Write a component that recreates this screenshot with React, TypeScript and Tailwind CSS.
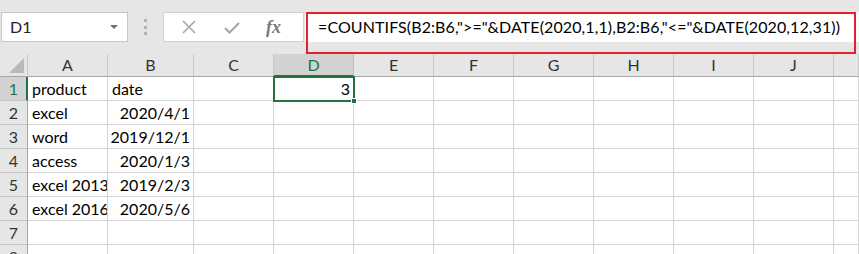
import type { ReactNode } from "react";

const COLS = ["A", "B", "C", "D", "E", "F", "G", "H", "I", "J", ""];
const WIDTHS = ["w-[80px]", "w-[86px]", "w-[80px]", "w-[80px]", "w-[80px]", "w-[80px]", "w-[80px]", "w-[80px]", "w-[80px]", "w-[80px]", "flex-1"];

type Cell = { text: string; right?: boolean };

const DATA: Record<number, Record<number, Cell>> = {
  1: { 0: { text: "product" }, 1: { text: "date" }, 3: { text: "3", right: true } },
  2: { 0: { text: "excel" }, 1: { text: "2020/4/1", right: true } },
  3: { 0: { text: "word" }, 1: { text: "2019/12/1", right: true } },
  4: { 0: { text: "access" }, 1: { text: "2020/1/3", right: true } },
  5: { 0: { text: "excel 2013" }, 1: { text: "2019/2/3", right: true } },
  6: { 0: { text: "excel 2016" }, 1: { text: "2020/5/6", right: true } },
};

const FORMULA = '=COUNTIFS(B2:B6,">="&DATE(2020,1,1),B2:B6,"<="&DATE(2020,12,31))';

function FormulaBar() {
  return (
    <div className="relative flex h-[54px] items-start bg-[#e6e6e6] pt-[12px]">
      <div className="ml-[1px] flex h-[30px] w-[127px] items-center justify-between border border-[#c6c6c6] bg-white pl-[8px] pr-[9px] text-[16px] text-[#222]">
        <span>D1</span>
        <svg width="8" height="4" viewBox="0 0 8 4">
          <path d="M0 0h8L4 4z" fill="#707070" />
        </svg>
      </div>
      <div className="ml-[16px] mt-[7px] flex h-[16px] flex-col justify-between">
        <span className="h-[3px] w-[3px] bg-[#b4b4b4]" />
        <span className="h-[3px] w-[3px] bg-[#b4b4b4]" />
        <span className="h-[3px] w-[3px] bg-[#b4b4b4]" />
      </div>
      <div className="ml-[16px] flex h-[30px] w-[141px] items-center border border-[#d0d0d0] bg-white">
        <svg className="ml-[18px]" width="14" height="14" viewBox="0 0 14 14">
          <path d="M1 1l12 12M13 1L1 13" stroke="#a6a6a6" strokeWidth="1.6" />
        </svg>
        <svg className="ml-[28px] mt-[2px]" width="16" height="12" viewBox="0 0 16 12">
          <path d="M1 6l4.5 4.5L15 1" stroke="#a6a6a6" strokeWidth="2" fill="none" />
        </svg>
        <span className="ml-[26px] font-['Liberation_Serif',serif] text-[18px] font-bold italic text-[#7a7a7a]">fx</span>
      </div>
      <div className="ml-[1px] flex h-[30px] flex-1 items-center overflow-hidden whitespace-nowrap bg-white pl-[13px] font-['Lato',sans-serif] text-[16px] tracking-[0.1px] text-black">
        {FORMULA}
      </div>
      <div className="absolute left-[306px] top-[12px] h-[42px] w-[550px] border-2 border-[#e3202e]" />
    </div>
  );
}

function HeaderCell({ children, w, active }: { children: ReactNode; w: string; active?: boolean }) {
  return (
    <div
      className={`${w} flex h-[23px] shrink-0 items-center justify-center border-r text-[16px] ${
        active
          ? "border-b-2 border-r-[#bdbdbd] border-b-[#217346] bg-[#d2d2d2] text-[#217346]"
          : "border-b border-r-[#c8c8c8] border-b-[#a6a6a6] text-[#333]"
      }`}
    >
      {children}
    </div>
  );
}

function Row({ n }: { n: number }) {
  const cells = DATA[n] || {};
  const active = n === 1;
  return (
    <div className="flex h-[24px]">
      <div
        className={`flex w-[28px] shrink-0 items-center justify-center border-b border-b-[#c8c8c8] text-[16px] ${
          active
            ? "border-r-2 border-r-[#217346] bg-[#d2d2d2] text-[#217346]"
            : "border-r border-r-[#a6a6a6] bg-[#e6e6e6] text-[#333]"
        }`}
      >
        <span className={active ? "ml-[1px]" : ""}>{n}</span>
      </div>
      {COLS.map((_, i) => {
        const c = cells[i];
        return (
          <div
            key={i}
            className={`${WIDTHS[i]} flex shrink-0 items-end overflow-hidden whitespace-nowrap border-b border-r border-[#d4d4d4] bg-white pb-[1px] text-[16px] leading-[20px] text-black ${
              c?.right ? "justify-end pr-[3px]" : "pl-[4px]"
            }`}
          >
            {c?.text}
          </div>
        );
      })}
    </div>
  );
}

export default function App() {
  return (
    <div className="h-[254px] w-[859px] overflow-hidden bg-white font-['Lato',sans-serif]">
      <FormulaBar />
      <div className="relative">
        <div className="flex bg-[#e6e6e6]">
          <div className="relative h-[23px] w-[28px] shrink-0 border-b border-r border-b-[#a6a6a6] border-r-[#c8c8c8]">
            <svg className="absolute bottom-[3px] right-[3px]" width="15" height="15" viewBox="0 0 15 15">
              <path d="M15 0V15H0z" fill="#b8b8b8" />
            </svg>
          </div>
          {COLS.map((c, i) => (
            <HeaderCell key={i} w={WIDTHS[i]} active={c === "D"}>
              {c}
            </HeaderCell>
          ))}
        </div>
        {[1, 2, 3, 4, 5, 6, 7, 8].map((n) => (
          <Row key={n} n={n} />
        ))}
        <div className="pointer-events-none absolute left-[273px] top-[22px] h-[26px] w-[82px] border-2 border-[#217346]">
          <div className="absolute -bottom-[4px] -right-[4px] h-[6px] w-[6px] border border-white bg-[#217346]" />
        </div>
      </div>
    </div>
  );
}
